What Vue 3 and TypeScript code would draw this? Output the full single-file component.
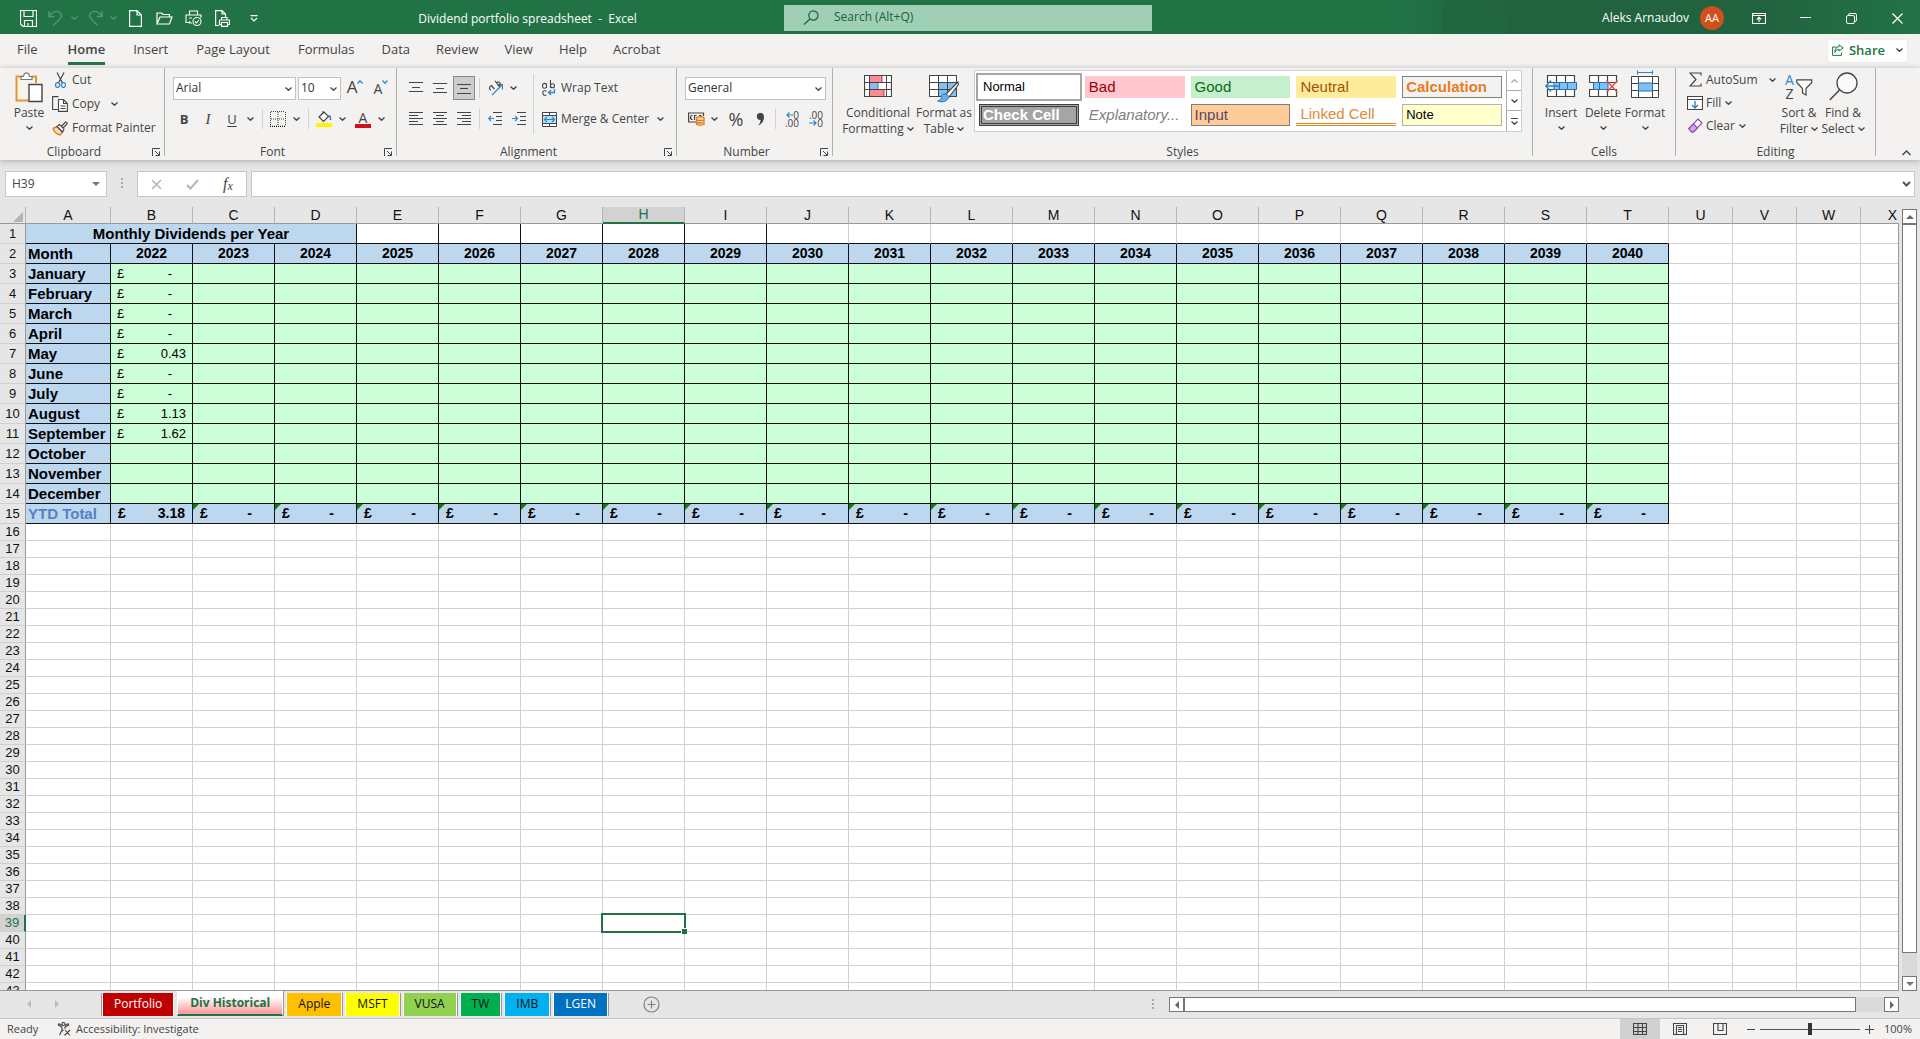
<script setup lang="ts">
import { h, ref } from 'vue'

// One stroke or shape of an icon: [path, stroke, fill, stroke width]
type Shape = [string, string?, string?, number?]
type IconDef = [number, number, Shape[]]

const K = '#444'
const B = '#2b88c8'
const L = '#7fc0f5'
const W = '#fff'
const N = 'none'
const G = '#4f9a70'

const icons: Record<string, IconDef> = {
  chev: [7, 4, [['M.5 .5L3.5 3.3L6.5 .5', K, N, 1.3]]],
  chevDim: [7, 4, [['M.5 .5L3.5 3.3L6.5 .5', '#aaa', N, 1.3]]],
  chevGreen: [7, 4, [['M.5 .5L3.5 3.3L6.5 .5', G, N, 1.2]]],
  launch: [9, 9, [['M.5 8V.5H8M3 3L7 7M7.5 3.5V7.5H3.5', K]]],
  save: [17, 17, [['M.5 .5H16.5V16.5H3L.5 14zM4 .5V6.5H13V.5M4.500 16.500V10.500H12.500V16.500M8 13V16', W, N, 1.2]]],
  undo: [16, 16, [['M1 1V6.500H6.500M1 6.500C4 2 8 0 11.500 2.500C16 6 12 9 5.500 15.500', G, N, 1.4]]],
  redo: [16, 16, [['M15 1V6.500H9.500M15 6.500C12 2 8 0 4.500 2.500C0 6 4 9 10.500 15.500', G, N, 1.4]]],
  fresh: [13, 17, [['M.6 .6H8L12.400 5V16.400H.6zM8 .6V5H12.400', W, N, 1.2]]],
  open: [17, 13, [['M1 12V1H5.500L7 2.500H13.500V5M1 12L4 5H16L13.500 12z', W, N, 1.2]]],
  print: [17, 17, [['M4.500 5V1H12.500V5M7 13H4.500V11M4.500 12.500H1V5H16V8M4 8H7', W, N, 1.1], ['M16 11.500A4 4 0 1 1 8 11.500A4 4 0 1 1 16 11.500zM10 11.500L11.500 13L14 10', W, N, 1.1]]],
  pageprint: [15, 17, [['M4 15.500H.6V.6H7L10.500 4V7M7 .6V4H10.500', W, N, 1.2], ['M4.500 10H14.400V14.500H12.500M6.500 14.500H4.500V10M6.500 10V7.500H12V10M6.500 12.500H12.500V16.400H6.500z', W, N, 1.1]]],
  more: [8, 7, [['M.5 .6H7.500M1 3L4 6L7 3', W, N, 1.2]]],
  search: [16, 15, [['M15 5.500A4.600 4.600 0 1 1 5.800 5.500A4.600 4.600 0 1 1 15 5.500M7 9L1 14.500', '#1f5f3b', N, 1.2]]],
  ribbonOpt: [14, 11, [['M.5 .5H13.500V10.500H.5zM.5 2.500H13.500M7 9V4.500M4.800 6.500L7 4.300L9.200 6.500', W, N, 1.1]]],
  min: [11, 2, [['M0 .5H11', W]]],
  restore: [11, 11, [['M2.500 2.500V2Q2.500 .5 4 .5H9Q10.500 .5 10.500 2V7Q10.500 8.500 9 8.500H8.500M.5 4Q.5 2.500 2 2.500H7Q8.500 2.500 8.500 4V9Q8.500 10.500 7 10.500H2Q.5 10.500 .5 9z', W]]],
  close: [11, 11, [['M.5 .5L10.500 10.500M10.500 .5L.5 10.500', W, N, 1.2]]],
  share: [12, 12, [['M4.500 3H.6V11.400H9.400V8.500M7 .8L11.200 4L7 7V5.200Q4 5 2.800 8.500Q2.800 3 7 2.700z', '#217346', N]]],
  paste: [28, 31, [['M7.500 4.500H1.500V28.500H13', '#e3933b', '#fbf3e6', 2], ['M17 4.500H21V11', '#e3933b', N, 2], ['M6 7.500V4.500H8.500Q9 .8 11.500 .8T14.500 4.500H17V7.500z', '#777', W, 1.2], ['M14 12.500H27V29.500H14z', K, W, 1.4]]],
  cut: [11, 16, [['M2 .5L7.500 11M9 .5L3.500 11', K, N, 1.2], ['M4.500 13A2 2 0 1 1 .6 13A2 2 0 1 1 4.500 13M10.400 13A2 2 0 1 1 6.500 13A2 2 0 1 1 10.400 13', B, N, 1.3]]],
  copy: [16, 16, [['M6.500 13.500H.6V.6H6.500', K, N, 1.1], ['M6.500 3.500H11.500L15.400 7.500V15.400H6.500zM11.500 3.500V7.500H15.400M8.500 10H13.500M8.500 12.500H13.500', K, W, 1.1]]],
  painter: [16, 15, [['M1 7.500L5 5.500L10.500 11L8 14Q3 13 1 7.500', '#e07b1a', '#fbd9b4', 1.4], ['M5 5.500L7.500 3.500L12 8L10.500 11zM9.500 5.500L13.500 1Q15.500 1 15 3L11 7', K, W, 1.2]]],
  borders: [16, 16, [['M1 .5H15M.5 1V14M15.500 1V14M8 1V14M1 8H15', K, N, 1], ['M0 15.500H16', '#111', N, 1.5]]],
  bucket: [16, 16, [['M0 12H16V16H0z', N, '#fff200'], ['M3 6L8 1L12.500 5.500L7.500 10.500z', K, W, 1.2], ['M7 3V0', K], ['M12.500 5Q14.500 4 14.500 9', B, N, 1.6]]],
  fontbar: [16, 4, [['M0 0H16V4H0z', N, '#d0121b']]],
  up: [6, 4, [['M.5 3.500L3 .8L5.500 3.500', B, N, 1.3]]],
  down: [6, 4, [['M.5 .5L3 3.200L5.500 .5', B, N, 1.3]]],
  alTop: [14, 12, [['M0 .5H14M3 5.500H11M0 9.500H14', K, N, 1.1]]],
  alMid: [14, 12, [['M0 1.500H14M3 6.500H11M0 10.500H14', K, N, 1.1]]],
  alBot: [14, 12, [['M0 2.500H14M3 6.500H11M0 11.500H14', K, N, 1.1]]],
  left: [14, 14, [['M0 .5H14M0 3.500H9M0 6.500H14M0 9.500H9M0 12.500H14', K, N, 1]]],
  center: [14, 14, [['M0 .5H14M3 3.500H11M0 6.500H14M3 9.500H11M0 12.500H14', K, N, 1]]],
  right: [14, 14, [['M0 .5H14M5 3.500H14M0 6.500H14M5 9.500H14M0 12.500H14', K, N, 1]]],
  orient: [16, 16, [['M5 15L15 5M10.500 4.500H15.500V9.500', B, N, 1.2], ['M5.500 6A2 2 0 1 0 4 10.200M4 5.500L7.500 9M8 .8L12.500 7M9.500 3A2 2 0 1 1 11.500 6', K, N, 1.1]]],
  outdent: [14, 14, [['M5 .5H14M8 4.500H14M8 8.500H14M5 12.500H14', K], ['M6 6.500H.8M3 4L.8 6.500L3 9', B, N, 1.2]]],
  indent: [14, 14, [['M5 .5H14M8 4.500H14M8 8.500H14M5 12.500H14', K], ['M0 6.500H5.500M3.200 4L5.500 6.500L3.200 9', B, N, 1.2]]],
  wrap: [14, 16, [['M4.500 3.500V8M4.500 5.800A2 2 0 1 1 .6 5.800A2 2 0 1 1 4.500 5.800M8.500 0V8M12.500 5.800A2 2 0 1 1 8.500 5.800A2 2 0 1 1 12.500 5.800M4.500 11Q.8 10 .8 13T4.500 15', K, N, 1.1], ['M12.500 9V12.500H6.500M9 10L6.500 12.500L9 15', B, N, 1.3]]],
  merge: [15, 15, [['M.5 .5H14.500V14.500H.5z', K, W], ['M1 4H14V11H1z', N, '#b9defa'], ['M.5 3.500H14.500M.5 11.500H14.500M7.500 .5V3.500M7.500 11.500V14.500', K], ['M2.500 7.500H12.500M5 5L2.500 7.500L5 10M10 5L12.500 7.500L10 10', B, N, 1.2]]],
  money: [17, 14, [['M9 10H.6V1H15.500V4M4.500 3.500Q2.500 3.500 2.500 5.500T4.500 7.500M6.500 8V3.500H8.500M11 3.500H13.500', K, N, 1.2], ['M8.500 5.500Q12.500 4 16 5.500V12.500Q12.500 14 8.500 12.500zM8.500 8Q12.500 9 16 8M8.500 10.500Q12.500 11.500 16 10.500', '#e07b1a', '#fde3c4', 1.3]]],
  comma: [9, 13, [['M.8 3.500A3.300 3.300 0 0 1 8 3.500Q8.500 9.500 2 12.500Q5 9.500 4.500 7Q1 7 .8 3.500', N, K]]],
  arrL: [7, 6, [['M7 3H1M3.500 .5L1 3L3.500 5.500', B, N, 1.2]]],
  arrR: [8, 6, [['M0 3H7M4.500 .5L7 3L4.500 5.500', B, N, 1.2]]],
  cond: [28, 22, [['M.5 .5H27.500V21.500H.5z', K, W], ['M5.500 .5H18V7.500H5.500zM5.500 14.500H20V21.500H5.500z', '#b3404a', '#ff8a93'], ['M5.500 7.500H14V14.500H5.500z', '#4a7cc0', '#8cb6f0'], ['M.5 7.500H27.500M.5 14.500H27.500M22.500 .5V21.500M5.500 .5V21.500', K], ['M.5 .5H27.500V21.500H.5z', K, N, 1.2]]],
  fmtTable: [30, 28, [['M.5 .5H27.500V21.500H.5z', K, W], ['M10 7.500H27.500V21.500H10z', N, L], ['M.5 7.500H27.500M.5 14.500H27.500M9.500 .5V21.500M18.500 .5V21.500M.5 .5H27.500V21.500H.5z', K], ['M29 7L17 19L20 22L29.500 9.500z', K, W, 1.1], ['M17 19Q12 18 12.500 23Q11.500 25.500 8.500 26Q17 29 20 22z', '#2f7fc1', '#61aef0', 1]]],
  insert: [32, 22, [['M2.500 .5H29.500V7.500H2.500zM11.500 .5V7.500M20.500 .5V7.500M2.500 14.500H29.500V21.500H2.500zM11.500 14.500V21.500M20.500 14.500V21.500', K, W, 1.2], ['M9 7.500H31.500V14.500H9zM14.500 7.500V14.500M22.500 7.500V14.500', '#2a6fae', L], ['M14 11H1M6 5.500L.8 11L6 16.500', B, N, 1.6]]],
  del: [29, 22, [['M.5 .5H27.500V7.500H.5zM9.500 .5V7.500M18.500 .5V7.500M.5 14.500H27.500V21.500H.5zM9.500 14.500V21.500M18.500 14.500V21.500', K, W, 1.2], ['M4.500 7.500H19V14.500H4.500zM10.500 7.500V14.500', '#2a6fae', L], ['M17.500 5.500L28.500 17.500M28.500 5.500L17.500 17.500', '#e8514a', N, 1.4]]],
  format: [28, 28, [['M6.500 2.500H21.500M6.500 .5V4.500M21.500 .5V4.500', B, N, 1.2], ['M.5 6.500H27.500V27.500H.5zM.5 13.500H27.500M.5 20.500H27.500M7.500 6.500V27.500M21.500 6.500V27.500', K, W], ['M7.500 13H21.500V21H7.500z', '#2a6fae', L]]],
  sum: [13, 15, [['M12 3.500V1H1L7 7.500L1 14H12V11.500', K, N, 1.2]]],
  fill: [16, 14, [['M.5 .5H15.500V13.500H.5zM.5 3.500H15.500', K, W, 1.1], ['M8 5V12M5 9L8 12L11 9', B, N, 1.4]]],
  clear: [15, 15, [['M10 1L14 5L5.500 14H3.500L.8 10.500z', '#8c4ba8', W, 1.1], ['M5.500 6L9.500 10L5.500 14H3.500L.8 10.500z', '#8c4ba8', '#d9a3e8', 1.1]]],
  funnel: [17, 17, [['M.8 .8H15.700V3.500L10 9.500V16L6.500 14V9.500L.8 3.500z', K, W, 1.2]]],
  find: [29, 31, [['M28 13A10 10 0 1 1 8 13A10 10 0 1 1 28 13', K, '#fafafa', 1.3], ['M10.500 20L.8 30', K, N, 1.5]]],
  collapse: [9, 6, [['M.5 5L4.500 1L8.500 5', K, N, 1.4]]],
  tri: [8, 4, [['M0 0H8L4 4z', N, '#777']]],
  cancel: [11, 11, [['M1 1L10 10M10 1L1 10', '#b5b5b5', N, 1.6]]],
  check: [13, 11, [['M1 6L4.500 9.500L12 1', '#b5b5b5', N, 2]]],
  expand: [9, 6, [['M1 1L4.500 4.500L8 1', '#555', N, 2]]],
  corner: [10, 10, [['M10 0V10H0z', N, '#b4b4b4']]],
  triUp: [8, 4, [['M0 4H8L4 0z', N, '#666']]],
  triL: [4, 8, [['M4 0V8L0 4z', N, '#666']]],
  triR: [4, 8, [['M0 0V8L4 4z', N, '#666']]],
  navL: [4, 8, [['M4 0V8L0 4z', N, '#bdbdbd']]],
  navR: [4, 8, [['M0 0V8L4 4z', N, '#bdbdbd']]],
  plus: [17, 17, [['M16 8.500A7.500 7.500 0 1 1 1 8.500A7.500 7.500 0 1 1 16 8.500M8.500 4.500V12.500M4.500 8.500H12.500', '#808080', N, 1.2]]],
  access: [14, 14, [['M8 2A1.500 1.500 0 1 1 5 2A1.500 1.500 0 1 1 8 2M1 3L5 5V8L2.500 13M12 3L8 5V7M1 3L2 1.800L5 3.500M12 3L11 1.800L8 3.500M5 9L6.500 8M8 8L13 13.500M13 8L7.500 13.500', K, N, 1.1]]],
  vNormal: [14, 12, [['M.5 .5H13.500V11.500H.5zM.5 4.500H13.500M.5 8.500H13.500M5 .5V11.500M9.500 .5V11.500', K, N, 1.1]]],
  vPage: [14, 12, [['M.5 .5H13.500V11.500H.5zM3.500 2.500H10.500V11.500M3.500 2.500V11.500M5 4.500H9M5 6.500H9M5 8.500H9', K, N, 1.1]]],
  vBreak: [14, 12, [['M.5 .5H13.500V11.500H.5zM5 .5V7.500H10V.5', K, N, 1.1]]],
}

const Icon = (p: { name: string }) => {
  const [w, ht, shapes] = icons[p.name]
  return h(
    'svg',
    { width: w, height: ht, viewBox: `0 0 ${w} ${ht}`, preserveAspectRatio: 'xMidYMin', 'aria-hidden': 'true' },
    shapes.map(([d, stroke = N, fill = N, sw = 1]) => h('path', { d, stroke, fill, 'stroke-width': sw })),
  )
}
Icon.props = ['name']

const menu = ['File', 'Home', 'Insert', 'Page Layout', 'Formulas', 'Data', 'Review', 'View', 'Help', 'Acrobat']
const activeMenu = ref('Home')

const cellStyles = [
  ['Normal', 'normal'], ['Bad', 'bad'], ['Good', 'good'], ['Neutral', 'neutral'], ['Calculation', 'calc'],
  ['Check Cell', 'checkcell'], ['Explanatory...', 'expl'], ['Input', 'inp'], ['Linked Cell', 'linked'], ['Note', 'note'],
]

const letters = 'ABCDEFGHIJKLMNOPQRSTUVWX'.split('')
const years = Array.from({ length: 19 }, (_, i) => 2022 + i)
const months: [string, string][] = [
  ['January', '-'], ['February', '-'], ['March', '-'], ['April', '-'], ['May', '0.43'], ['June', '-'],
  ['July', '-'], ['August', '1.13'], ['September', '1.62'], ['October', ''], ['November', ''], ['December', ''],
]
const plainRows = Array.from({ length: 28 }, (_, i) => 16 + i)
const selected = ref({ col: 'H', row: 39 })

const sheets = [
  ['Portfolio', 'red'], ['Div Historical', 'current'], ['Apple', 'amber'], ['MSFT', 'yellow'],
  ['VUSA', 'lime'], ['TW', 'green'], ['IMB', 'sky'], ['LGEN', 'navy'],
]
const zoom = ref(50)
</script>

<template>
  <div class="app">
    <header class="titlebar">
      <div class="tb-left">
        <nav class="quick" aria-label="Quick access">
          <button class="q" aria-label="Save"><Icon name="save" /></button>
          <button class="q wide" aria-label="Undo"><Icon name="undo" /><Icon name="chevGreen" /></button>
          <button class="q wide" aria-label="Redo"><Icon name="redo" /><Icon name="chevGreen" /></button>
          <button class="q" aria-label="New"><Icon name="fresh" /></button>
          <button class="q" aria-label="Open"><Icon name="open" /></button>
          <button class="q" aria-label="Quick print"><Icon name="print" /></button>
          <button class="q" aria-label="Print preview"><Icon name="pageprint" /></button>
          <button class="q last" aria-label="Customize"><Icon name="more" /></button>
        </nav>
        <div class="doc">Dividend portfolio spreadsheet&nbsp; -&nbsp; Excel</div>
      </div>
      <label class="searchbox"><Icon name="search" /><input type="text" placeholder="Search (Alt+Q)" aria-label="Search" /></label>
      <div class="tb-right">
        <span class="user">Aleks Arnaudov</span>
        <span class="avatar">AA</span>
        <button class="win" aria-label="Ribbon display"><Icon name="ribbonOpt" /></button>
        <button class="win" aria-label="Minimize"><Icon name="min" /></button>
        <button class="win" aria-label="Restore"><Icon name="restore" /></button>
        <button class="win" aria-label="Close"><Icon name="close" /></button>
      </div>
    </header>

    <div class="menubar">
      <button v-for="m in menu" :key="m" class="tab" :class="{ on: m === activeMenu }" @click="activeMenu = m"><span>{{ m }}</span></button>
      <button class="share"><Icon name="share" /><span>Share</span><Icon name="chev" /></button>
    </div>

    <div class="ribbon">
      <section class="group clipboard">
        <div class="body">
          <button class="big paste"><Icon name="paste" /><span>Paste</span><Icon name="chev" /></button>
          <div class="stack">
            <button class="line"><i><Icon name="cut" /></i>Cut</button>
            <button class="line"><i><Icon name="copy" /></i>Copy<Icon name="chev" class="far" /></button>
            <button class="line"><i><Icon name="painter" /></i>Format Painter</button>
          </div>
        </div>
        <footer><span>Clipboard</span><button class="launch" aria-label="Clipboard settings"><Icon name="launch" /></button></footer>
      </section>
      <div class="vsep"></div>

      <section class="group font">
        <div class="body rows">
          <div class="row boxes">
            <span class="combo family"><select aria-label="Font"><option>Arial</option></select><Icon name="chev" /></span>
            <span class="combo size"><select aria-label="Font size"><option>10</option></select><Icon name="chev" /></span>
            <button class="ib grow" aria-label="Increase font size"><span>A</span><Icon name="up" /></button>
            <button class="ib shrink" aria-label="Decrease font size"><span>A</span><Icon name="down" /></button>
          </div>
          <div class="row">
            <button class="ib bold">B</button>
            <button class="ib italic">I</button>
            <button class="ib under">U</button>
            <button class="ch" aria-label="Underline options"><Icon name="chev" /></button>
            <span class="sep wide"></span>
            <button class="ib" aria-label="Borders"><Icon name="borders" class="dotted" /></button>
            <button class="ch" aria-label="Border options"><Icon name="chev" /></button>
            <span class="sep wide"></span>
            <button class="ib" aria-label="Fill colour"><Icon name="bucket" /></button>
            <button class="ch" aria-label="Fill options"><Icon name="chev" /></button>
            <button class="ib fontcol" aria-label="Font colour"><span>A</span><Icon name="fontbar" /></button>
            <button class="ch" aria-label="Font colour options"><Icon name="chev" /></button>
          </div>
        </div>
        <footer><span>Font</span><button class="launch" aria-label="Font settings"><Icon name="launch" /></button></footer>
      </section>
      <div class="vsep"></div>

      <section class="group align">
        <div class="body">
          <div class="rows">
            <div class="row">
              <button class="ib" aria-label="Top align"><Icon name="alTop" /></button>
              <button class="ib" aria-label="Middle align"><Icon name="alMid" /></button>
              <button class="ib pressed" aria-label="Bottom align"><Icon name="alBot" /></button>
              <span class="sep"></span>
              <button class="ib" aria-label="Orientation"><Icon name="orient" /></button>
              <button class="ch" aria-label="Orientation options"><Icon name="chev" /></button>
            </div>
            <div class="row">
              <button class="ib" aria-label="Align left"><Icon name="left" /></button>
              <button class="ib" aria-label="Center"><Icon name="center" /></button>
              <button class="ib" aria-label="Align right"><Icon name="right" /></button>
              <span class="sep"></span>
              <button class="ib" aria-label="Decrease indent"><Icon name="outdent" /></button>
              <button class="ib" aria-label="Increase indent"><Icon name="indent" /></button>
            </div>
          </div>
          <span class="sep high"></span>
          <div class="rows flush">
            <button class="line"><i><Icon name="wrap" /></i>Wrap Text</button>
            <button class="line"><i><Icon name="merge" /></i>Merge &amp; Center<Icon name="chev" class="end" /></button>
          </div>
        </div>
        <footer><span>Alignment</span><button class="launch" aria-label="Alignment settings"><Icon name="launch" /></button></footer>
      </section>
      <div class="vsep"></div>

      <section class="group number">
        <div class="body rows">
          <div class="row boxes">
            <span class="combo fmt"><select aria-label="Number format"><option>General</option></select><Icon name="chev" /></span>
          </div>
          <div class="row">
            <button class="ib" aria-label="Accounting format"><Icon name="money" /></button>
            <button class="ch" aria-label="Accounting options"><Icon name="chev" /></button>
            <button class="ib percent">%</button>
            <button class="ib" aria-label="Comma style"><Icon name="comma" /></button>
            <span class="sep"></span>
            <button class="ib dec" aria-label="Increase decimal"><span><Icon name="arrL" />0</span><span>.00</span></button>
            <button class="ib dec" aria-label="Decrease decimal"><span>.00</span><span><Icon name="arrR" />0</span></button>
          </div>
        </div>
        <footer><span>Number</span><button class="launch" aria-label="Number settings"><Icon name="launch" /></button></footer>
      </section>
      <div class="vsep"></div>

      <section class="group styles">
        <div class="body">
          <button class="big condf"><Icon name="cond" /><span>Conditional<br />Formatting <Icon name="chev" /></span></button>
          <button class="big ftab"><Icon name="fmtTable" /><span>Format as<br />Table <Icon name="chev" /></span></button>
          <div class="gallery">
            <div class="swatches">
              <button v-for="[label, cls] in cellStyles" :key="cls" class="sw" :class="cls">{{ label }}</button>
            </div>
            <div class="gscroll">
              <button aria-label="Previous styles"><Icon name="chevDim" class="flip" /></button>
              <button aria-label="Next styles"><Icon name="chev" /></button>
              <button aria-label="All styles" class="all"><Icon name="chev" /></button>
            </div>
          </div>
        </div>
        <footer><span>Styles</span></footer>
      </section>
      <div class="vsep"></div>

      <section class="group cells">
        <div class="body">
          <button class="big"><Icon name="insert" /><span>Insert</span><Icon name="chev" /></button>
          <button class="big"><Icon name="del" /><span>Delete</span><Icon name="chev" /></button>
          <button class="big"><Icon name="format" class="tallicon" /><span>Format</span><Icon name="chev" /></button>
        </div>
        <footer><span>Cells</span></footer>
      </section>
      <div class="vsep"></div>

      <section class="group editing">
        <div class="body">
          <div class="stack">
            <button class="line"><i><Icon name="sum" /></i>AutoSum<Icon name="chev" class="far" /></button>
            <button class="line"><i><Icon name="fill" /></i>Fill<Icon name="chev" class="near" /></button>
            <button class="line"><i><Icon name="clear" /></i>Clear<Icon name="chev" class="near" /></button>
          </div>
          <button class="big sort"><em><b>A<br /><u>Z</u></b><Icon name="funnel" /></em><span>Sort &amp;<br />Filter <Icon name="chev" /></span></button>
          <button class="big findb"><Icon name="find" class="tallicon" /><span>Find &amp;<br />Select <Icon name="chev" /></span></button>
        </div>
        <footer><span>Editing</span></footer>
      </section>
      <div class="vsep"></div>
      <div class="collapse"><button aria-label="Collapse ribbon"><Icon name="collapse" /></button></div>
    </div>

    <div class="formulabar">
      <label class="namebox"><input type="text" value="H39" aria-label="Name box" /><Icon name="tri" /></label>
      <span class="dots"></span>
      <div class="fx">
        <button aria-label="Cancel"><Icon name="cancel" /></button>
        <button aria-label="Enter"><Icon name="check" /></button>
        <button class="fn"><i>f</i><sub>x</sub></button>
      </div>
      <label class="formula"><input type="text" aria-label="Formula" /><Icon name="expand" /></label>
    </div>

    <main class="work">
      <div class="gridwrap">
        <table class="grid">
          <colgroup>
            <col class="c-head" /><col class="c-a" /><col v-for="n in 19" :key="n" class="c-year" /><col v-for="n in 4" :key="'r' + n" class="c-std" />
          </colgroup>
          <thead>
            <tr>
              <th class="cornercell"><Icon name="corner" /></th>
              <th v-for="c in letters" :key="c" :class="{ sel: c === selected.col }">{{ c }}</th>
            </tr>
          </thead>
          <tbody>
            <tr class="tall">
              <th>1</th>
              <td colspan="4" class="k blue title">Monthly Dividends per Year</td>
              <td v-for="n in 5" :key="n" class="k"></td>
              <td v-for="n in 11" :key="'l' + n" class="kb"></td>
              <td v-for="n in 4" :key="'e' + n"></td>
            </tr>
            <tr class="tall">
              <th>2</th>
              <td class="k blue name">Month</td>
              <td v-for="y in years" :key="y" class="k blue year">{{ y }}</td>
              <td v-for="n in 4" :key="'e' + n"></td>
            </tr>
            <tr v-for="([m, v], i) in months" :key="m" class="tall">
              <th>{{ i + 3 }}</th>
              <td class="k blue name">{{ m }}</td>
              <td class="k mint"><div v-if="v" class="money" :class="{ dash: v === '-' }"><span>£</span><span>{{ v }}</span></div></td>
              <td v-for="n in 18" :key="n" class="k mint"></td>
              <td v-for="n in 4" :key="'e' + n"></td>
            </tr>
            <tr class="tall total">
              <th>15</th>
              <td class="k blue name ytd">YTD Total</td>
              <td class="k blue"><div class="money"><span>£</span><span>3.18</span></div></td>
              <td v-for="n in 18" :key="n" class="k blue flag"><div class="money dash"><span>£</span><span>-</span></div></td>
              <td v-for="n in 4" :key="'e' + n"></td>
            </tr>
            <tr v-for="r in plainRows" :key="r">
              <th :class="{ sel: r === selected.row }">{{ r }}</th>
              <td v-for="c in letters" :key="c" :class="{ cursor: c === selected.col && r === selected.row }"></td>
            </tr>
          </tbody>
        </table>
      </div>
      <div class="vscroll">
        <button aria-label="Scroll up"><Icon name="triUp" /></button>
        <div class="vtrack"><div class="vthumb"></div></div>
        <button aria-label="Scroll down"><Icon name="tri" /></button>
      </div>
    </main>

    <div class="sheetbar">
      <div class="navs">
        <button aria-label="Previous sheet"><Icon name="navL" /></button>
        <button aria-label="Next sheet"><Icon name="navR" /></button>
      </div>
      <div class="sheets">
        <button v-for="[s, cls] in sheets" :key="s" class="sheet" :class="cls">{{ s }}</button>
      </div>
      <button class="add" aria-label="New sheet"><Icon name="plus" /></button>
      <div class="hscroll">
        <span class="dots"></span>
        <button aria-label="Scroll left"><Icon name="triL" /></button>
        <div class="htrack"><div class="hthumb"></div></div>
        <button aria-label="Scroll right"><Icon name="triR" /></button>
      </div>
    </div>

    <footer class="status">
      <span class="ready">Ready</span>
      <button class="acc"><Icon name="access" />Accessibility: Investigate</button>
      <div class="views">
        <button class="on" aria-label="Normal view"><Icon name="vNormal" /></button>
        <button aria-label="Page layout view"><Icon name="vPage" /></button>
        <button aria-label="Page break view"><Icon name="vBreak" /></button>
      </div>
      <div class="zoom">
        <button class="minus" aria-label="Zoom out"></button>
        <input v-model="zoom" type="range" min="0" max="100" aria-label="Zoom" />
        <button class="plus" aria-label="Zoom in"></button>
        <span>100%</span>
      </div>
    </footer>
  </div>
</template>

<style>
body { margin: 0; overflow: hidden; }
</style>

<style scoped>
* { box-sizing: border-box; }
.app { display: flex; flex-direction: column; height: 100vh; background: #e6e6e6; color: #444; font: 12px/16px "Open Sans", "Noto Sans", sans-serif; overflow: hidden; }
button { border: 0; padding: 0; margin: 0; background: none; color: inherit; font: inherit; display: flex; align-items: center; justify-content: center; white-space: nowrap; }
input, select { border: 0; padding: 0; margin: 0; background: none; font: inherit; color: inherit; outline: 0; min-width: 0; }
svg { flex: none; display: block; }

.titlebar { flex: none; height: 34px; display: grid; grid-template-columns: 784fr 368px 768fr; color: #fff;
  background: radial-gradient(circle at 1474px 20px, #226641 32px, transparent 34px), linear-gradient(90deg, #217346 0 73%, #22633f 78% 92%, #226b43 96%, #217346); }
.tb-left, .tb-right { display: flex; align-items: center; min-width: 0; }
.quick { display: flex; align-items: center; padding-left: 14px; height: 36px; }
.q { width: 29px; height: 34px; }
.q.wide { width: 39px; gap: 7px; }
.q.last { width: 34px; }
.doc { flex: 1; text-align: center; padding-top: 1px; white-space: nowrap; }
.searchbox { margin: 5px 0; padding: 0 0 2px 19px; background: #9fcfb5; color: #1f5f3b; display: flex; align-items: center; gap: 15px; }
.searchbox input { flex: 1; }
.searchbox input::placeholder { color: #1f5f3b; opacity: 1; }
.tb-right { justify-content: flex-end; }
.avatar { width: 24px; height: 24px; margin: 0 12px 0 11px; border-radius: 50%; background: #d0501a; text-align: center; line-height: 24px; font-size: 11px; }
.win { width: 46px; height: 32px; }

.menubar { flex: none; height: 34px; display: flex; align-items: center; background: #f3f2f1; padding: 0 13px 0 3px; font-size: 13px; }
.tab { height: 34px; padding: 0 14px; }
.tab:first-child { margin-right: 2px; }
.tab:nth-child(n + 6) { padding: 0 13px; }
.tab span { height: 27px; line-height: 22px; margin-top: 1px; }
.tab.on { font-weight: 600; }
.tab.on span { box-shadow: inset 0 -3px #217346; }
.share { margin-left: auto; width: 79px; height: 22px; background: #fff; border-radius: 2px; box-shadow: 0 0 1px #bbb; color: #217346; font-weight: 600; gap: 5px; line-height: 16px; padding-bottom: 2px; }
.share span { margin-right: 6px; }

.ribbon { flex: none; display: flex; height: 92px; background: #f3f2f1; box-shadow: 0 1px 6px #aaa; position: relative; }
.vsep { flex: none; width: 1px; height: 88px; background: #b0b0b0; }
.group { flex: none; display: flex; flex-direction: column; }
.group footer { display: flex; height: 16px; line-height: 16px; text-align: center; }
.group footer span { flex: 1; }
.launch { width: 16px; height: 16px; }
.body { flex: 1; display: flex; min-height: 0; }
.clipboard { width: 164px; }
.font { width: 231px; }
.align { width: 279px; }
.number { width: 155px; }
.group.styles { flex: 1; }
.cells { width: 142px; }
.editing { width: 199px; }
.collapse { flex: none; width: 44px; display: flex; align-items: flex-end; justify-content: flex-end; padding: 0 9px 2px 0; }
.collapse button { height: 10px; }

.big { flex-direction: column; justify-content: flex-start; padding-top: 7px; }
.big > svg:first-child { height: 30px; }
.big > span { line-height: 16px; }
.big > svg:last-child { margin-top: 5px; }
.big span svg { display: inline-block; vertical-align: 2px; }
.paste { width: 58px; padding-top: 4px; }
.paste > svg:first-child { height: 31px; margin-bottom: 2px; }
.stack { display: flex; flex-direction: column; align-items: flex-start; }
.line { height: 24px; justify-content: flex-start; }
.line i { width: 20px; display: flex; justify-content: center; }
.clipboard .stack { margin-left: -6px; }
.clipboard .line i { width: 16px; margin-right: 4px; }
.align .line i { margin-right: 2px; }
.far { margin-left: 11px; }
.near { margin-left: 4px; }
.end { margin-left: 8px; }

.rows { flex-direction: column; padding: 8px 0 0 7px; display: flex; gap: 7px; }
.row { display: flex; align-items: center; height: 24px; }
.row.boxes { padding-left: 1px; gap: 2px; }
.ib { width: 24px; height: 24px; flex: none; }
.ch { width: 12px; height: 24px; flex: none; }
.sep { flex: none; width: 1px; height: 20px; background: #d0d0d0; margin: 0 3px; }
.sep.wide { margin-left: 6px; }
.sep.high { height: 60px; margin: 6px 3px 0 2px; }
.rows.flush { padding-left: 2px; }
.combo { position: relative; display: flex; height: 23px; background: #fff; border: 1px solid #c2c2c2; }
.combo select { appearance: none; flex: 1; padding-left: 2px; color: #333; }
.combo svg { position: absolute; right: 3px; top: 9px; pointer-events: none; }
.family { width: 123px; }
.size { width: 43px; }
.fmt { width: 141px; }
.grow, .shrink { align-items: flex-start; }
.grow span { font-size: 17px; line-height: 22px; }
.shrink span { font-size: 14px; line-height: 25px; }
.grow svg, .shrink svg { margin-top: 4px; }
.bold { font-weight: 700; font-size: 13px; }
.italic { font-family: "Liberation Serif", serif; font-style: italic; font-size: 15px; }
.under { text-decoration: underline; text-underline-offset: 2px; font-size: 13px; }
.dotted { stroke-dasharray: 1 1; }
.fontcol { flex-direction: column; margin-left: 3px; font-size: 14px; line-height: 13px; }
.pressed { width: 22px; margin: 0 1px; border: 1px solid #8a8a8a; background: #cdcdcd; }
.percent { margin-left: 4px; font-size: 18px; }
.dec { flex-direction: column; align-items: flex-end; font-size: 10px; line-height: 8px; padding-right: 4px; }
.dec span { display: flex; align-items: center; }

.condf { width: 76px; margin-left: 7px; }
.ftab { width: 56px; }
.gallery { flex: 1; margin: 2px 10px 0 2px; height: 62px; background: #fff; border: 1px solid #d0d0d0; display: flex; }
.swatches { flex: 1; display: grid; grid-template-columns: repeat(5, 1fr); grid-template-rows: 22px 22px; gap: 6px; padding: 5px 4px; }
.sw { justify-content: flex-start; padding-left: 4px; font: 15px/20px "Liberation Sans", Arial, sans-serif; overflow: hidden; }
.normal { font-size: 13px; color: #000; box-shadow: 0 0 0 1px #fff, 0 0 0 3px #a6a6a6; }
.bad { background: #ffc7ce; color: #9c0006; }
.good { background: #c6efce; color: #0a6b10; }
.neutral { background: #ffeb9c; color: #9c5700; }
.calc { background: #f2f2f2; color: #e87d1e; border: 1px solid #7f7f7f; font-weight: 700; padding-left: 3px; }
.checkcell { background: #a5a5a5; color: #fff; border: 3px double #3f3f3f; font-weight: 700; padding-left: 1px; }
.expl { color: #7f7f7f; font-style: italic; }
.inp { background: #ffcc99; color: #5a4468; border: 1px solid #7f7f7f; padding-left: 3px; }
.linked { color: #e08a3a; border-bottom: 3px double #e08a1e; }
.note { background: #ffffcc; color: #000; border: 1px solid #b2b2b2; font-size: 13px; padding-left: 3px; }
.gscroll { width: 15px; display: grid; grid-template-rows: 20px 20px 20px; }
.gscroll button { border: 1px solid #ababab; border-width: 0 0 1px 1px; }
.gscroll button:last-child { border-bottom: 0; }
.flip { transform: rotate(180deg); }
.all svg { border-top: 1px solid #444; height: 7px; padding-top: 2px; }
.cells .body { padding-left: 7px; }
.cells .big { width: 42px; }
.big > svg.tallicon:first-child { margin-top: -5px; height: 35px; }
.editing .stack { width: 101px; padding-left: 9px; }
.editing .line { height: 23px; }
.editing .line i { margin-right: 1px; }
.sort { width: 44px; }
.sort em { display: flex; height: 30px; font-style: normal; gap: 2px; align-items: center; margin: -3px 0 3px; }
.sort b { font-weight: 400; font-size: 14px; line-height: 14px; color: #2b88c8; }
.sort u { text-decoration: none; color: #444; }
.findb { width: 44px; }

.formulabar { flex: none; display: flex; height: 26px; margin: 11px 5px 10px; color: #444; }
.namebox, .fx, .formula { display: flex; align-items: center; background: #fff; border: 1px solid #c6c6c6; }
.namebox { width: 102px; padding: 0 6px; }
.namebox input { flex: 1; }
.dots { width: 2px; height: 12px; background: repeating-linear-gradient(#aaa 0 2px, transparent 2px 4px); }
.formulabar .dots { margin: 7px 14px; }
.fx { width: 110px; margin-right: 4px; }
.fx button { flex: 1; height: 24px; }
.fn { font: italic 16px/20px "Liberation Serif", serif; }
.fn sub { font-size: 12px; line-height: 12px; vertical-align: baseline; margin-top: 4px; }
.formula { flex: 1; padding-right: 3px; }
.formula input { flex: 1; }

.work { flex: 1; min-height: 0; display: flex; }
.gridwrap { flex: 1; min-width: 0; overflow: hidden; border-bottom: 1px solid #999; position: relative; }
.gridwrap::after { content: ""; position: absolute; top: 17px; bottom: 0; right: 0; width: 1px; background: #999; }
.grid { table-layout: fixed; width: 1924px; border-collapse: separate; border-spacing: 0; background: #fff; font: 13px/16px "Liberation Sans", Arial, sans-serif; color: #000; }
.c-head { width: 26px; }
.c-a { width: 85px; }
.c-year { width: 82px; }
.c-std { width: 64px; }
.grid th, .grid td { padding: 0; height: 17px; overflow: hidden; white-space: nowrap; }
.grid td { border-right: 1px solid #d0d0d0; border-bottom: 1px solid #d0d0d0; }
.grid th { font-weight: 400; font-size: 14px; background: #e6e6e6; color: #111; }
.grid thead th { border-bottom: 1px solid #999; border-right: 1px solid #b5b5b5; line-height: 16px; }
.grid tbody th { border-right: 1px solid #999; border-bottom: 1px solid #cfcfcf; font-size: 13px; line-height: 16px; }
.grid thead th.sel { background: #d2d2d2; color: #217346; border-bottom: 2px solid #217346; line-height: 15px; }
.grid tbody th.sel { background: #d2d2d2; color: #217346; border-right: 2px solid #217346; }
.cornercell svg { margin: 4px 2px 0 auto; }
.grid .tall th, .grid .tall td { height: 20px; line-height: 19px; }
.grid td.k { border-color: #111; }
.grid td.kb { border-bottom-color: #111; }
.blue { background: #bdd7ee; }
.mint { background: #ccffd8; }
.title { text-align: center; font-weight: 700; font-size: 15px; }
.grid td.name { font-weight: 700; font-size: 15px; padding-left: 2px; }
.year { text-align: center; font-weight: 700; font-size: 14px; }
.grid td.ytd { color: #5580c6; }
.money { display: flex; justify-content: space-between; padding: 0 6px; }
.money.dash { padding-right: 20px; }
.total .money { font-weight: 700; font-size: 14px; padding: 0 7px; }
.total .money.dash { padding-right: 22px; }
.flag { position: relative; }
.flag::before { content: ""; position: absolute; left: 0; top: 0; border-top: 6px solid #107c10; border-right: 6px solid transparent; }
.grid td.cursor { position: relative; overflow: visible; }
.cursor::before { content: ""; position: absolute; inset: -2px; border: 2px solid #217346; }
.cursor::after { content: ""; position: absolute; right: -3px; bottom: -3px; width: 5px; height: 5px; background: #217346; box-shadow: -1px -1px #fff; }

.vscroll { width: 21px; padding: 2px 3px 0 3px; display: flex; flex-direction: column; }
.vscroll button { height: 15px; background: #fff; border: 1px solid #777; }
.vtrack { flex: 1; background: #dadada; }
.vthumb { height: 97%; background: #fff; border: 1px solid #777; }

.sheetbar { flex: none; height: 28px; display: flex; align-items: flex-start; border-bottom: 1px solid #c6c6c6; }
.navs { width: 102px; display: flex; padding: 4px 0 0 15px; }
.navs button { width: 28px; height: 18px; }
.sheets { display: flex; align-items: flex-start; }
.sheet { margin: 2px 3px 0 0; height: 23px; padding: 0 11px 1px; border: 1px solid #fff; border-width: 0 1px; color: #111; box-shadow: 1px 0 #999; }
.sheet.red { background: #c00000; color: #fff; box-shadow: -1px 0 #999; }
.sheet.current { margin-top: -1px; height: 26px; padding: 2px 12px 0; background: linear-gradient(#fff 30%, #ff9c9c 95%); color: #217346; font-weight: 700; border-bottom: 2px solid #217346; }
.amber { background: #ffc000; }
.yellow { background: #ffff00; }
.lime { background: #92d050; }
.green { background: #00b050; }
.sky { background: #00b0f0; }
.navy { background: #0070c0; }
.sheet.navy { color: #fff; }
.add { margin: 5px 0 0 32px; }
.hscroll { flex: none; margin-left: auto; width: 40%; display: flex; padding: 6px 21px 0 0; }
.hscroll .dots { margin: 2px 15px 0 0; }
.hscroll button { width: 15px; height: 15px; background: #fff; border: 1px solid #777; }
.htrack { flex: 1; background: #dadada; }
.hthumb { width: 96%; height: 15px; background: #fff; border: 1px solid #777; }

.status { flex: none; height: 20px; background: #f3f2f1; display: flex; align-items: center; font-size: 11px; padding-left: 7px; }
.ready { width: 50px; }
.acc { gap: 5px; }
.views { margin-left: auto; display: flex; }
.views button { width: 40px; height: 20px; }
.views .on { background: #d0d0d0; }
.zoom { display: flex; align-items: center; padding: 0 8px 0 7px; }
.zoom .minus { width: 8px; height: 1px; background: #444; }
.zoom .plus { width: 9px; height: 9px; background: linear-gradient(#444, #444) center / 9px 1px no-repeat, linear-gradient(#444, #444) center / 1px 9px no-repeat; }
.zoom input { appearance: none; width: 100px; height: 12px; margin: 0 5px; background: linear-gradient(#555, #555) center / 100% 1px no-repeat; }
.zoom input::-webkit-slider-thumb { appearance: none; width: 4px; height: 12px; background: #333; }
.zoom span { width: 38px; text-align: right; }
</style>
